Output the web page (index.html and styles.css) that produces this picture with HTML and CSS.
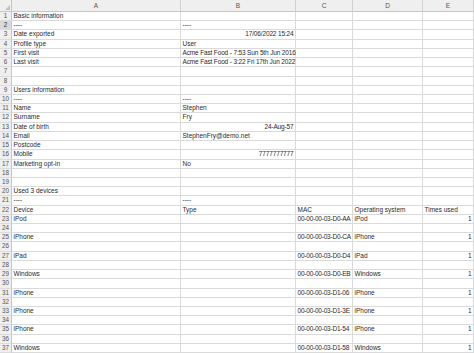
FILE: index.html
```html
<!DOCTYPE html>
<html>
<head>
<meta charset="utf-8">
<link rel="stylesheet" href="styles.css">
</head>
<body>
<div class="sheet">
  <div class="corner"><span class="tri"></span></div>
  <div class="ch">A</div><div class="ch">B</div><div class="ch">C</div><div class="ch">D</div><div class="ch">E</div>

  <div class="rh">1</div><div class="c">Basic information</div><div class="c"></div><div class="c"></div><div class="c"></div><div class="c"></div>
  <div class="rh sel">2</div><div class="c">----</div><div class="c">----</div><div class="c"></div><div class="c"></div><div class="c"></div>
  <div class="rh">3</div><div class="c">Date exported</div><div class="c r n">17/06/2022 15:24</div><div class="c"></div><div class="c"></div><div class="c"></div>
  <div class="rh">4</div><div class="c">Profile type</div><div class="c">User</div><div class="c"></div><div class="c"></div><div class="c"></div>
  <div class="rh">5</div><div class="c">First visit</div><div class="c n">Acme Fast Food - 7:53 Sun 5th Jun 2016</div><div class="c"></div><div class="c"></div><div class="c"></div>
  <div class="rh">6</div><div class="c">Last visit</div><div class="c n">Acme Fast Food - 3:22 Fri 17th Jun 2022</div><div class="c"></div><div class="c"></div><div class="c"></div>
  <div class="rh">7</div><div class="c"></div><div class="c"></div><div class="c"></div><div class="c"></div><div class="c"></div>
  <div class="rh">8</div><div class="c"></div><div class="c"></div><div class="c"></div><div class="c"></div><div class="c"></div>
  <div class="rh">9</div><div class="c">Users information</div><div class="c"></div><div class="c"></div><div class="c"></div><div class="c"></div>
  <div class="rh">10</div><div class="c">----</div><div class="c">----</div><div class="c"></div><div class="c"></div><div class="c"></div>
  <div class="rh">11</div><div class="c">Name</div><div class="c">Stephen</div><div class="c"></div><div class="c"></div><div class="c"></div>
  <div class="rh">12</div><div class="c">Surname</div><div class="c">Fry</div><div class="c"></div><div class="c"></div><div class="c"></div>
  <div class="rh">13</div><div class="c">Date of birth</div><div class="c r n">24-Aug-57</div><div class="c"></div><div class="c"></div><div class="c"></div>
  <div class="rh">14</div><div class="c">Email</div><div class="c">StephenFry@demo.net</div><div class="c"></div><div class="c"></div><div class="c"></div>
  <div class="rh">15</div><div class="c">Postcode</div><div class="c"></div><div class="c"></div><div class="c"></div><div class="c"></div>
  <div class="rh">16</div><div class="c">Mobile</div><div class="c r n">7777777777</div><div class="c"></div><div class="c"></div><div class="c"></div>
  <div class="rh">17</div><div class="c">Marketing opt-in</div><div class="c">No</div><div class="c"></div><div class="c"></div><div class="c"></div>
  <div class="rh">18</div><div class="c"></div><div class="c"></div><div class="c"></div><div class="c"></div><div class="c"></div>
  <div class="rh">19</div><div class="c"></div><div class="c"></div><div class="c"></div><div class="c"></div><div class="c"></div>
  <div class="rh">20</div><div class="c">Used 3 devices</div><div class="c"></div><div class="c"></div><div class="c"></div><div class="c"></div>
  <div class="rh">21</div><div class="c">----</div><div class="c">----</div><div class="c"></div><div class="c"></div><div class="c"></div>
  <div class="rh">22</div><div class="c">Device</div><div class="c">Type</div><div class="c">MAC</div><div class="c">Operating system</div><div class="c">Times used</div>
  <div class="rh">23</div><div class="c">iPod</div><div class="c"></div><div class="c mac">00-00-00-03-D0-AA</div><div class="c">iPod</div><div class="c r">1</div>
  <div class="rh">24</div><div class="c"></div><div class="c"></div><div class="c"></div><div class="c"></div><div class="c"></div>
  <div class="rh">25</div><div class="c">iPhone</div><div class="c"></div><div class="c mac">00-00-00-03-D0-CA</div><div class="c">iPhone</div><div class="c r">1</div>
  <div class="rh">26</div><div class="c"></div><div class="c"></div><div class="c"></div><div class="c"></div><div class="c"></div>
  <div class="rh">27</div><div class="c">iPad</div><div class="c"></div><div class="c mac">00-00-00-03-D0-D4</div><div class="c">iPad</div><div class="c r">1</div>
  <div class="rh">28</div><div class="c"></div><div class="c"></div><div class="c"></div><div class="c"></div><div class="c"></div>
  <div class="rh">29</div><div class="c">Windows</div><div class="c"></div><div class="c mac">00-00-00-03-D0-EB</div><div class="c">Windows</div><div class="c r">1</div>
  <div class="rh">30</div><div class="c"></div><div class="c"></div><div class="c"></div><div class="c"></div><div class="c"></div>
  <div class="rh">31</div><div class="c">iPhone</div><div class="c"></div><div class="c mac">00-00-00-03-D1-06</div><div class="c">iPhone</div><div class="c r">1</div>
  <div class="rh">32</div><div class="c"></div><div class="c"></div><div class="c"></div><div class="c"></div><div class="c"></div>
  <div class="rh">33</div><div class="c">iPhone</div><div class="c"></div><div class="c mac">00-00-00-03-D1-3E</div><div class="c">iPhone</div><div class="c r">1</div>
  <div class="rh">34</div><div class="c"></div><div class="c"></div><div class="c"></div><div class="c"></div><div class="c"></div>
  <div class="rh">35</div><div class="c">iPhone</div><div class="c"></div><div class="c mac">00-00-00-03-D1-54</div><div class="c">iPhone</div><div class="c r">1</div>
  <div class="rh">36</div><div class="c"></div><div class="c"></div><div class="c"></div><div class="c"></div><div class="c"></div>
  <div class="rh">37</div><div class="c">Windows</div><div class="c"></div><div class="c mac">00-00-00-03-D1-58</div><div class="c">Windows</div><div class="c r">1</div>
</div>
</body>
</html>
```
FILE: styles.css
```css
html, body {
  margin: 0;
  padding: 0;
  background: #ffffff;
  overflow: hidden;
}
.sheet {
  display: grid;
  grid-template-columns: 12px 169px 115px 57px 70px 51px;
  grid-template-rows: 12px repeat(37, 9.22px);
  font-family: "Liberation Sans", Arial, sans-serif;
  font-size: 6.5px;
  color: #2a2a2a;
  width: 474px;
}
.sheet > div {
  box-sizing: border-box;
  white-space: nowrap;
  overflow: visible;
  min-width: 0;
}
.corner {
  background: #efefef;
  border-right: 1px solid #c6c6c6;
  border-bottom: 1px solid #c6c6c6;
  position: relative;
}
.tri {
  position: absolute;
  right: 1px;
  bottom: 1px;
  width: 0;
  height: 0;
  border-left: 5px solid transparent;
  border-bottom: 5px solid #c0c0c0;
}
.ch {
  background: #efefef;
  border-right: 1px solid #d2d2d2;
  border-bottom: 1px solid #c6c6c6;
  color: #555555;
  text-align: center;
  line-height: 11px;
}
.rh {
  background: #efefef;
  border-right: 1px solid #c6c6c6;
  border-bottom: 1px solid #dcdcdc;
  color: #555555;
  text-align: center;
  line-height: 8.5px;
  font-size: 6.3px;
}
.rh.sel {
  background: #d9d9d9;
  color: #333333;
}
.c {
  border-right: 1px solid #dadada;
  border-bottom: 1px solid #dadada;
  padding: 0 1.5px;
  line-height: 8.6px;
}
.c.r {
  text-align: right;
}
.c.n {
  letter-spacing: -0.15px;
}
.c.mac {
  letter-spacing: -0.22px;
}
```
